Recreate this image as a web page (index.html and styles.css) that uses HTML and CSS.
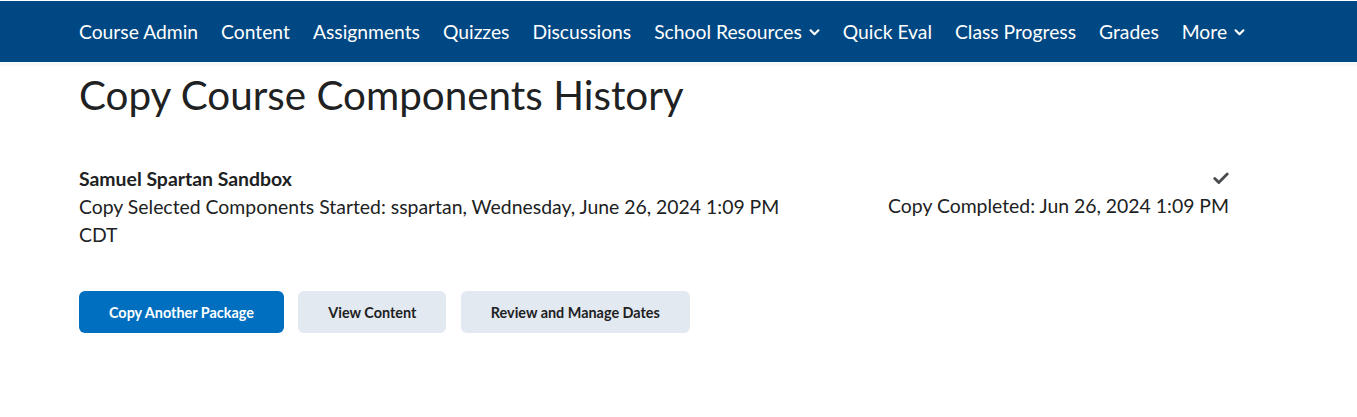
FILE: index.html
```html
<!DOCTYPE html>
<html lang="en">
<head>
    <meta charset="UTF-8">
    <title>Copy Course Components History</title>
    <link rel="stylesheet" href="styles.css">
</head>
<body>
<div class="navbar">
    <div class="nav-inner row-box">
        <a class="nav-item">Course Admin</a>
        <a class="nav-item">Content</a>
        <a class="nav-item">Assignments</a>
        <a class="nav-item">Quizzes</a>
        <a class="nav-item">Discussions</a>
        <a class="nav-item">School Resources
            <svg class="chev" viewBox="0 0 12 8" width="12" height="8"><path d="M1.5 1.5 6 6l4.5-4.5" fill="none" stroke="#fff" stroke-width="2.4" stroke-linecap="round" stroke-linejoin="round"/></svg>
        </a>
        <a class="nav-item">Quick Eval</a>
        <a class="nav-item">Class Progress</a>
        <a class="nav-item">Grades</a>
        <a class="nav-item">More
            <svg class="chev" viewBox="0 0 12 8" width="12" height="8"><path d="M1.5 1.5 6 6l4.5-4.5" fill="none" stroke="#fff" stroke-width="2.4" stroke-linecap="round" stroke-linejoin="round"/></svg>
        </a>
    </div>
</div>
<div class="nav-shadow"></div>

<div class="page">
    <h1 class="title">Copy Course Components History</h1>

    <div class="history row-box">
        <div class="started">
            <div class="course-name">Samuel Spartan Sandbox</div>
            <div class="info">Copy Selected Components Started: sspartan, Wednesday, June 26, 2024 1:09 PM CDT</div>
        </div>
        <div class="status col-box">
            <svg class="check" viewBox="0 0 18 14" width="18" height="14"><path d="M2 7.5 6.5 12 16 2.5" fill="none" stroke="#494c4e" stroke-width="3.2" stroke-linecap="round" stroke-linejoin="round"/></svg>
            <div class="info">Copy Completed: Jun 26, 2024 1:09 PM</div>
        </div>
    </div>

    <div class="actions row-box">
        <button class="btn btn-primary">Copy Another Package</button>
        <button class="btn">View Content</button>
        <button class="btn">Review and Manage Dates</button>
    </div>
</div>
</body>
</html>
```

FILE: styles.css
```css
.row-box{display: flex;flex-direction: row;flex-wrap: nowrap;}
.col-box{display: flex;flex-direction: column;flex-wrap: nowrap;}

body{margin: 0;font-family: Lato, "Open Sans", sans-serif;color: #202122;background: #fff;}

.navbar{margin-top: 1px;height: 61px;background: #004883;}
.nav-inner{padding-left: 79px;height: 100%;align-items: center;gap: 23px;}
.nav-item{color: #fff;font-size: 19.3px;white-space: nowrap;display: flex;align-items: center;}
.nav-item .chev{margin-left: 7px;margin-top: 2px;width: 11px;height: 7px;}
.nav-shadow{height: 4px;background: #f7f8f9;}

.page{padding-left: 79px;width: 1150px;}
.title{margin: 0;font-size: 40.4px;font-weight: 400;line-height: 58px;color: #202122;}

.history{margin-top: 41px;font-size: 19.4px;line-height: 28px;justify-content: space-between;}
.started{max-width: 720px;}
.course-name{font-weight: 700;}
.status{align-items: flex-end;}
.status .check{margin: 6px 0 7px 0;width: 16px;height: 14px;}

.actions{margin-top: 42px;gap: 14.5px;}
.btn{font-family: Lato, "Open Sans", sans-serif;font-size: 14.4px;font-weight: 700;height: 42px;padding: 0 30px;border: none;border-radius: 6px;background: #e3e9f1;color: #202122;}
.btn-primary{background: #006fbf;color: #fff;}
```
